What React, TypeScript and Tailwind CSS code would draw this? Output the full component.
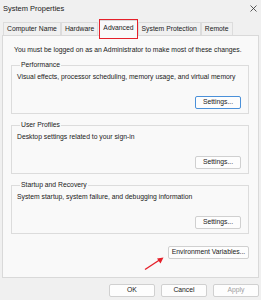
import React from "react";

const tabs = ["Computer Name", "Hardware", "Advanced", "System Protection", "Remote"];

function Btn({ label, focused, disabled, className = "" }: { label: string; focused?: boolean; disabled?: boolean; className?: string }) {
  return (
    <button
      className={
        "flex h-[13px] items-center justify-center rounded-[2px] border bg-[#fdfdfd] text-[6.8px] leading-none " +
        (focused ? "border-[#4a90d9] " : "border-[#d0d0d0] ") +
        (disabled ? "bg-[#f5f5f5] text-[#a0a0a0] " : "text-[#1a1a1a] ") +
        className
      }
    >
      {label}
    </button>
  );
}

function Group({ title, text, focused }: { title: string; text: string; focused?: boolean }) {
  return (
    <fieldset className="border border-[#dcdcdc] px-[5px]">
      <legend className="ml-[3px] px-[1px] text-[6.8px] leading-[10px] text-[#1a1a1a]">{title}</legend>
      <div className="flex h-[43px] flex-col justify-between pt-[2px] pb-[4px]">
        <p className="whitespace-nowrap text-[6.8px] leading-[10px] text-[#1a1a1a]">{text}</p>
        <div className="flex justify-end pr-[2px]">
          <Btn label="Settings..." focused={focused} className="w-[46px]" />
        </div>
      </div>
    </fieldset>
  );
}

export default function App() {
  return (
    <div className="flex h-[300px] w-[261px] flex-col bg-[#f0f0f0] font-['Liberation_Sans',Arial,sans-serif] text-[#1a1a1a]">
      {/* title bar */}
      <div className="flex h-[17px] items-center justify-between pl-[3px] pr-[4px] text-[7.5px]">
        <span>System Properties</span>
        <svg width="7" height="7" viewBox="0 0 7 7" className="stroke-[#333]">
          <path d="M0.5 0.5 L6.5 6.5 M6.5 0.5 L0.5 6.5" strokeWidth="0.8" fill="none" />
        </svg>
      </div>

      {/* tabs */}
      <div className="flex h-[18px] items-end pl-[3px]">
        {tabs.map((t) => {
          const active = t === "Advanced";
          return (
            <div
              key={t}
              className={
                "relative flex items-center border border-b-0 px-[3px] text-[6.8px] leading-none " +
                (active
                  ? "z-10 -mb-px ml-px h-[16px] border-[#d9d9d9] bg-[#f9f9f9]"
                  : "h-[13px] border-[#dcdcdc] bg-[#f0f0f0]")
              }
            >
              {t}
              {active && (
                <span className="pointer-events-none absolute -top-[2px] -left-[1px] -right-[1px] h-[20px] border-[1.5px] border-[#e5202a]" />
              )}
            </div>
          );
        })}
      </div>

      {/* panel */}
      <div className="relative mx-[2px] flex h-[243px] flex-col border border-[#d9d9d9] bg-[#f9f9f9] pl-[8px] pr-[9px]">
        <p className="mt-[9px] whitespace-nowrap pl-[3px] text-[6.8px] leading-[10px]">
          You must be logged on as an Administrator to make most of these changes.
        </p>
        <div className="mt-[5px] flex flex-col gap-[6px]">
          <Group title="Performance" text="Visual effects, processor scheduling, memory usage, and virtual memory" focused />
          <Group title="User Profiles" text="Desktop settings related to your sign-in" />
          <Group title="Startup and Recovery" text="System startup, system failure, and debugging information" />
        </div>
        <div className="mt-[12px] flex justify-end">
          <Btn label="Environment Variables..." className="w-[81px]" />
        </div>
        <svg className="absolute left-[140px] top-[221px]" width="22" height="14" viewBox="0 0 22 14">
          <path d="M2 12.5 L18 2" stroke="#e5202a" strokeWidth="1.4" fill="none" />
          <path d="M20.5 0.5 L14 1.5 L17.5 6.5 Z" fill="#e5202a" />
        </svg>
      </div>

      {/* dialog buttons */}
      <div className="mt-[6px] flex justify-end gap-[6px] pr-[2px]">
        <Btn label="OK" className="w-[46px]" />
        <Btn label="Cancel" className="w-[46px]" />
        <Btn label="Apply" disabled className="w-[46px]" />
      </div>
    </div>
  );
}
